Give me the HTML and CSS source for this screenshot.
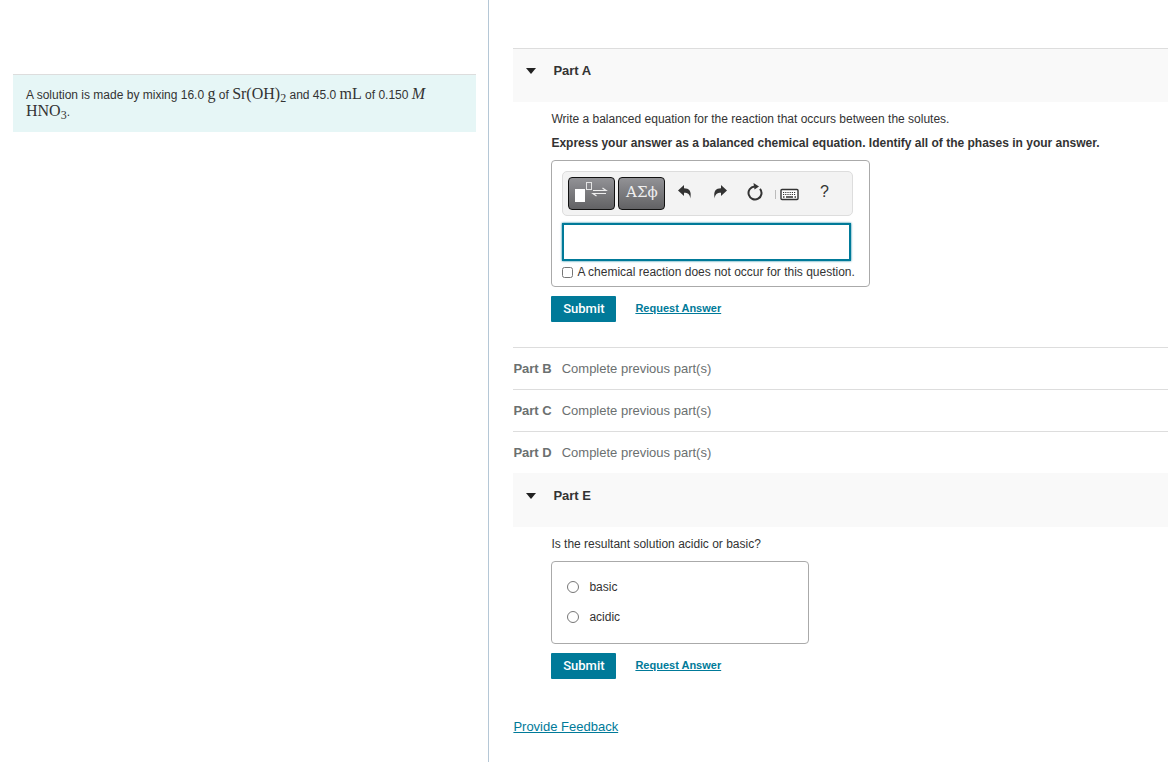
FILE: index.html
```html
<!DOCTYPE html>
<html lang="en">
<head>
<meta charset="UTF-8">
<meta name="viewport" content="width=device-width, initial-scale=1.0">
<title>Strontium Hydroxide and Nitric Acid</title>
<link rel="stylesheet" href="styles.css">
</head>
<body>
<aside class="intro">
<div class="problem">
A solution is made by mixing 16.0 <span class="math">g</span> of <span class="math">Sr(OH)<sub>2</sub></span> and 45.0 <span class="math">mL</span> of 0.150 <i class="math">M</i> <span class="math">HNO<sub>3</sub></span>.
</div>
</aside>

<main class="parts">
<section>
<h2 class="part-head">
<button type="button" class="toggle" aria-expanded="true"><span class="caret"></span>Part A</button>
</h2>
<form class="part-body">
<p>Write a balanced equation for the reaction that occurs between the solutes.</p>
<p><b>Express your answer as a balanced chemical equation. Identify all of the phases in your answer.</b></p>
<div class="answer-box equation">
<div class="toolbar">
<button type="button" class="palette" aria-label="Templates">
<svg width="34" height="24" viewBox="0 0 34 24">
<rect x="0" y="7" width="10" height="13" fill="#fff"/>
<rect x="11.500" y="0.500" width="5" height="7" fill="none" stroke="#e4e4e4"/>
<path d="M18 8.500H31L27.500 6M31 11.500H18L21.500 14" fill="none" stroke="#eee" stroke-width="1.2"/>
</svg>
</button>
<button type="button" class="palette greek" aria-label="Greek symbols">ΑΣϕ</button>
<button type="button" class="tool" aria-label="Undo">
<svg width="14" height="14" viewBox="0 0 14 14"><path d="M0 5.500L6 0V3.200C11 3.200 14 6 12.200 13.500C12 9.500 10 7.800 6 7.800V11Z" fill="#333"/></svg>
</button>
<button type="button" class="tool" aria-label="Redo">
<svg width="14" height="14" viewBox="0 0 14 14"><path d="M14 5.500L8 0V3.200C3 3.200 0 6 1.800 13.500C2 9.500 4 7.800 8 7.800V11Z" fill="#333"/></svg>
</button>
<button type="button" class="tool" aria-label="Reset">
<svg width="18" height="18" viewBox="0 0 18 18"><path d="M14 5.800A6.500 6.500 0 1 1 8.500 3.500" fill="none" stroke="#333" stroke-width="2"/><path d="M7.500 0L13 3.500L8.500 6.500Z" fill="#333"/></svg>
</button>
<button type="button" class="tool keyboard" aria-label="Keyboard shortcuts">
<svg width="19" height="13" viewBox="0 0 19 13">
<rect x="1" y="1.500" width="17" height="10" rx="1" fill="#fff" stroke="#333" stroke-width="1.400"/>
<path d="M3 4.500H16M3 6.500H16" stroke="#333" stroke-width="1.200" stroke-dasharray="1.200 1"/>
<path d="M3 9H4.500M6 9H13M14.500 9H16" stroke="#333" stroke-width="1.400"/>
</svg>
</button>
<button type="button" class="tool help" aria-label="Help">?</button>
</div>
<input type="text" class="equation-input" aria-label="Chemical equation">
<label class="no-reaction"><input type="checkbox">A chemical reaction does not occur for this question.</label>
</div>
<div class="actions">
<button type="submit" class="submit">Submit</button>
<a href="#" class="request">Request Answer</a>
</div>
</form>
</section>

<section class="locked"><h2>Part B</h2><span>Complete previous part(s)</span></section>
<section class="locked"><h2>Part C</h2><span>Complete previous part(s)</span></section>
<section class="locked"><h2>Part D</h2><span>Complete previous part(s)</span></section>

<section>
<h2 class="part-head plain">
<button type="button" class="toggle" aria-expanded="true"><span class="caret"></span>Part E</button>
</h2>
<form class="part-body">
<p>Is the resultant solution acidic or basic?</p>
<div class="answer-box choices">
<label><input type="radio" name="solution">basic</label>
<label><input type="radio" name="solution">acidic</label>
</div>
<div class="actions">
<button type="submit" class="submit">Submit</button>
<a href="#" class="request">Request Answer</a>
</div>
</form>
</section>

<a href="#" class="feedback">Provide Feedback</a>
</main>
</body>
</html>
```
FILE: styles.css
```css
* {
box-sizing: border-box;
}
body {
margin: 0;
min-height: 100vh;
display: flex;
font-family: "Liberation Sans", Arial, sans-serif;
font-size: 12px;
line-height: 16px;
color: #333;
background-color: #fff;
}
button {
font-family: inherit;
border: none;
padding: 0;
cursor: pointer;
}
a {
color: #007a99;
}
h2, p {
margin: 0;
}

/* left column */
.intro {
flex: 0 0 41.9%;
padding: 74px 12px 0 13px;
border-right: 1px solid #b5c7d6;
}
.problem {
padding: 11px 32px 12px 13px;
border-top: 1px solid #ddd;
background-color: #e6f6f6;
}
.math {
font-family: "Liberation Serif", "Times New Roman", serif;
font-size: 16px;
line-height: 1;
}
.math sub {
font-size: 12px;
line-height: 0;
vertical-align: -3px;
}

/* right column */
.parts {
flex: 1;
min-width: 0;
padding: 48px 0 24px 24px;
}
.part-head {
padding: 14px 13px 23px;
border-top: 1px solid #ddd;
background-color: #f9f9f9;
line-height: 16px;
}
.part-head.plain {
border-top-color: #f9f9f9;
}
.toggle {
display: flex;
align-items: center;
gap: 17px;
background: none;
font-size: 13px;
font-weight: 700;
line-height: 16px;
color: #333;
}
.caret {
border: 5px solid transparent;
border-top: 6px solid #222;
border-bottom: none;
}
.part-body {
padding: 9px 16px 0 38px;
}
.part-body p + p {
margin-top: 8px;
}
.answer-box {
width: fit-content;
margin-top: 9px;
border: 1px solid #aaa;
border-radius: 4px;
}
.equation {
padding: 10px 10px 6px;
}
.toolbar {
display: flex;
gap: 3px;
width: 291px;
padding: 5px;
margin-bottom: 7px;
border: 1px solid #ddd;
border-radius: 5px;
background-color: #f3f3f3;
}
.palette {
display: flex;
align-items: center;
justify-content: center;
width: 47px;
height: 33px;
border: 1px solid #111;
border-radius: 4px;
background-image: linear-gradient(#929296, #626264);
color: #eee;
}
.greek {
padding-bottom: 4px;
font-family: "DejaVu Serif", serif;
font-size: 15px;
}
.tool {
display: flex;
align-items: center;
justify-content: center;
width: 32px;
height: 30px;
background: none;
color: #333;
}
.palette + .tool {
margin-left: 1px;
}
.tool.keyboard {
justify-content: flex-end;
width: 25px;
padding-top: 5px;
background: linear-gradient(#bbb, #bbb) 1px 13px / 1px 9px no-repeat;
}
.tool.help {
margin-left: 6px;
font-size: 16px;
}
.equation-input {
display: block;
width: 289px;
height: 38px;
margin-bottom: 3px;
padding: 0 8px;
border: 2px solid #007a99;
outline: none;
box-shadow: 0 0 2px #007a99;
font-size: 16px;
}
.no-reaction {
display: flex;
align-items: center;
gap: 4px;
padding-right: 4px;
}
.no-reaction input {
width: 11px;
height: 11px;
margin: 0;
}
.actions {
display: flex;
align-items: center;
gap: 19px;
margin-top: 9px;
}
.submit {
width: 65px;
height: 26px;
padding-bottom: 2px;
border-radius: 1px;
background-color: #007a99;
color: #fff;
font-family: Roboto, sans-serif;
font-size: 13px;
font-weight: 500;
}
.submit:hover {
background-color: #00657f;
}
.request {
padding-bottom: 2px;
font-size: 11px;
font-weight: 700;
}

.locked {
display: flex;
gap: 10px;
padding: 13px 0 12px;
border-top: 1px solid #ddd;
font-size: 13px;
line-height: 16px;
color: #6b7070;
}
.locked h2 {
font-size: inherit;
}
section:first-child {
margin-bottom: 25px;
}
.choices {
display: flex;
flex-direction: column;
gap: 14px;
width: 258px;
padding: 17px 15px 18px;
}
.choices label {
display: flex;
align-items: center;
gap: 10px;
}
.choices input {
width: 12px;
height: 12px;
margin: 0;
}
.feedback {
display: inline-block;
margin-top: 40px;
font-size: 13px;
}
```
